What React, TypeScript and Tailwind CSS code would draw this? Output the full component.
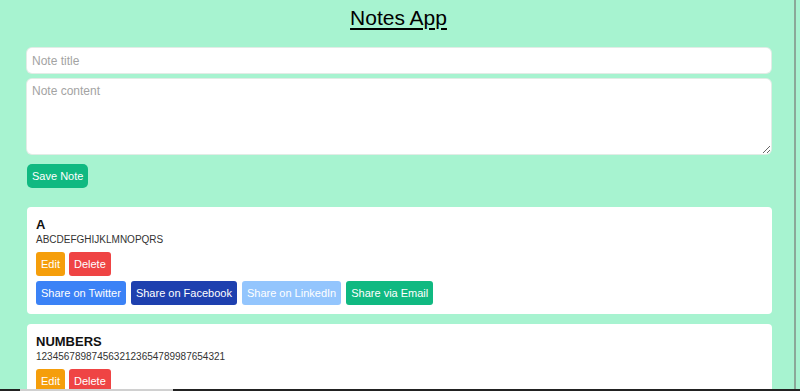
import React from "react";

const notes = [
  { title: "A", content: "ABCDEFGHIJKLMNOPQRS" },
  { title: "NUMBERS", content: "1234567898745632123654789987654321" },
];

const btn = "h-[24px] px-[5px] rounded-[3px] text-white text-[11px] leading-[24px] whitespace-nowrap";

export default function App() {
  return (
    <div
      className="w-[800px] h-[391px] overflow-hidden flex flex-col bg-[#a7f3d0]"
      style={{ fontFamily: '"Liberation Sans", Arial, sans-serif' }}
    >
      <div className="flex-1 min-h-0 overflow-hidden flex">
        <div className="w-[796px] border-r-[2px] border-[#8aa898] pl-[27px] pr-[24px]">
          <h1 className="pt-[4px] text-center text-[21px] leading-[28px] text-black underline underline-offset-[3px] decoration-[1.5px]">
            Notes App
          </h1>
          <div className="mt-[16px] flex flex-col">
            <input
              className="h-[25px] w-[744px] rounded-[5px] bg-white px-[5px] text-[12px] text-[#333] placeholder:text-[#a3a3a3] outline-none shadow-[0_0_0_1px_#e2ece6]"
              placeholder="Note title"
            />
            <textarea
              className="mt-[6px] h-[75px] w-[744px] rounded-[5px] bg-white px-[5px] py-[5px] text-[12px] leading-[14px] text-[#333] placeholder:text-[#a3a3a3] outline-none shadow-[0_0_0_1px_#e2ece6]"
              placeholder="Note content"
            />
            <div className="mt-[9px]">
              <button className="h-[24px] px-[5px] rounded-[5px] bg-[#10b981] text-white text-[11px]">
                Save Note
              </button>
            </div>
          </div>
          <div className="mt-[19px] flex flex-col gap-[10px] w-[745px]">
            {notes.map((n) => (
              <div key={n.title} className="bg-white rounded-[4px] px-[9px] pt-[10px] pb-[9px]">
                <div className="text-[13px] leading-[16px] font-semibold text-[#111]">{n.title}</div>
                <div className="text-[10px] leading-[14px] text-[#333]">{n.content}</div>
                <div className="mt-[5px] flex gap-[4px]">
                  <button className={`${btn} bg-[#f59e0b]`}>Edit</button>
                  <button className={`${btn} bg-[#ef4444]`}>Delete</button>
                </div>
                <div className="mt-[5px] flex gap-[5px]">
                  <button className={`${btn} bg-[#3b82f6]`}>Share on Twitter</button>
                  <button className={`${btn} bg-[#1e40af]`}>Share on Facebook</button>
                  <button className={`${btn} bg-[#93c5fd]`}>Share on LinkedIn</button>
                  <button className={`${btn} bg-[#10b981]`}>Share via Email</button>
                </div>
              </div>
            ))}
          </div>
        </div>
      </div>
      <div className="h-[2px] flex shrink-0">
        <div className="w-[20px] bg-[#222]" />
        <div className="w-[153px] bg-[#d0d0d0]" />
        <div className="flex-1 bg-[#222]" />
      </div>
    </div>
  );
}
